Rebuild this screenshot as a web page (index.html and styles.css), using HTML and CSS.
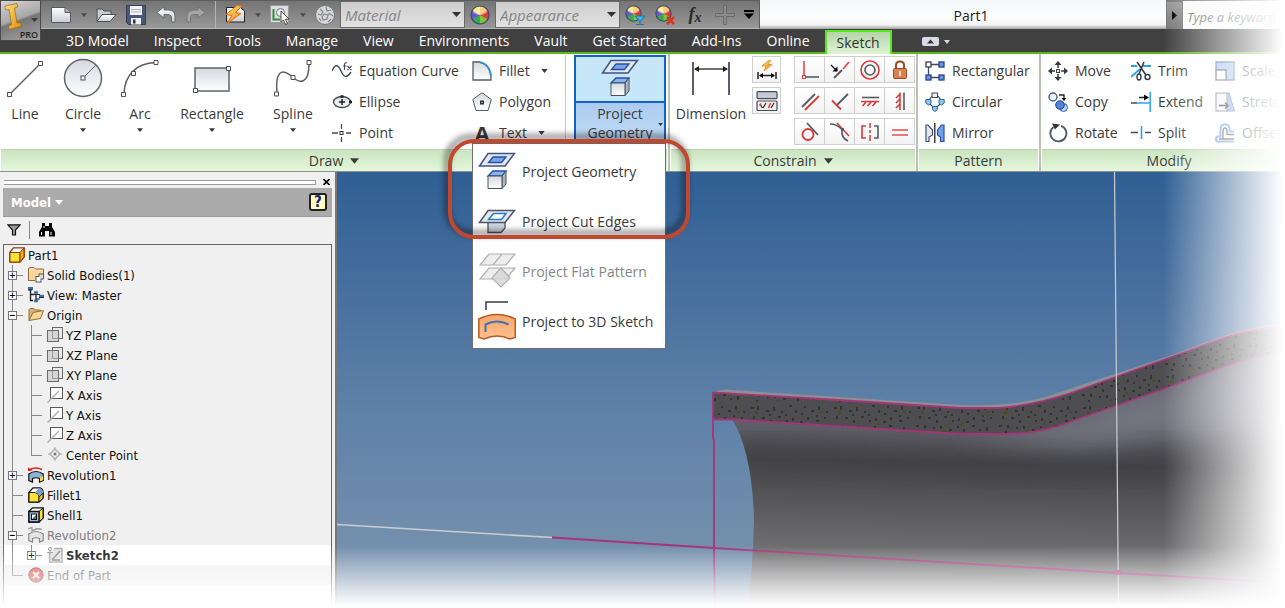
FILE: index.html
```html
<!DOCTYPE html>
<html lang="en">
<head>
    <meta charset="UTF-8">
    <meta name="viewport" content="width=device-width, initial-scale=1.0">
    <title>Part1</title>
    <link rel="stylesheet" href="styles.css">
</head>
<body>
    <!-- Shared symbols and gradients -->
    <svg class="defs" width="0" height="0" aria-hidden="true">
        <defs>
            <linearGradient id="paper" x1="0" y1="0" x2="0" y2="1"><stop offset="0" stop-color="#fff"/><stop offset="1" stop-color="#c9ccd2"/></linearGradient>
            <linearGradient id="steel" x1="0" y1="0" x2="0" y2="1"><stop offset="0" stop-color="#d5d8de"/><stop offset="1" stop-color="#fff"/></linearGradient>
            <linearGradient id="gold" x1="0" y1="0" x2="1" y2="1"><stop offset="0" stop-color="#ffe27a"/><stop offset="1" stop-color="#e08a08"/></linearGradient>
            <linearGradient id="orange" x1="0" y1="0" x2="0" y2="1"><stop offset="0" stop-color="#f9a66c"/><stop offset="1" stop-color="#ffc08c"/></linearGradient>
            <symbol id="wheel" viewBox="0 0 20 20">
                <path d="M10 10V1A9 9 0 0 1 17.8 5.5Z" fill="#f5a623"/>
                <path d="M10 10 17.8 5.5A9 9 0 0 1 17.8 14.5Z" fill="#e23a2e"/>
                <path d="M10 10 17.8 14.5A9 9 0 0 1 10 19Z" fill="#7cc33a"/>
                <path d="M10 10V19A9 9 0 0 1 2.2 14.5Z" fill="#35a853"/>
                <path d="M10 10 2.2 14.5A9 9 0 0 1 2.2 5.5Z" fill="#6a55c9"/>
                <path d="M10 10 2.2 5.5A9 9 0 0 1 10 1Z" fill="#f6dc4a"/>
                <ellipse cx="10" cy="6" rx="7" ry="4" fill="#fff" opacity=".45"/>
                <circle cx="10" cy="10" r="9" fill="none" stroke="#3b4a6b" stroke-width="1.2"/>
            </symbol>
            <symbol id="plane" viewBox="0 0 16 16">
                <rect x="5.5" y=".5" width="10" height="11" fill="#e9e9e9" stroke="#6a6a6a"/>
                <rect x=".5" y="3.500" width="11" height="11" fill="#cfcfcf" fill-opacity=".8" stroke="#6a6a6a"/>
                <path d="M5.500 4v7.500H11" fill="none" stroke="#9a9a9a"/>
            </symbol>
            <symbol id="axis" viewBox="0 0 16 16">
                <rect x="3.500" y=".5" width="12" height="11" fill="#fff" stroke="#5a5a5a"/>
                <path d="M.5 15.500 12 4" stroke="#b0b0b0" stroke-width="1.500"/>
            </symbol>
            <symbol id="project" viewBox="0 0 38 38">
                <path d="M10 1.500H36.500L27 14H1.500Z" fill="#e3e7ee" stroke="#3f5680" stroke-width="1.500"/>
                <path d="M15 5H28L23.500 10.500H10.500Z" fill="#7ba4e6" stroke="#2450a8" stroke-width="1.300"/>
                <path d="M10 24 15 19H28L24 24Z" fill="#8db3ef" stroke="#2450a8" stroke-width="1.300"/>
                <path d="M24 24 28 19V32L24 36.500Z" fill="#aeb5c2" stroke="#4a5060"/>
                <path d="M10 24H24V36.500H10Z" fill="url(#steel)" stroke="#4a5060"/>
            </symbol>
            <symbol id="caret" viewBox="0 0 8 5"><path d="M0 0H8L4 5Z" fill="currentColor"/></symbol>
            <pattern id="grain" width="83" height="31" patternUnits="userSpaceOnUse">
                <rect width="83" height="31" fill="#4e4e50"/>
                <path d="M4 5h3M11 3v4M19 8h3M27 4v4M34 9h2M42 3h3M49 7v3M57 4h2M64 8h3M72 3v4M79 9h2M7 13v3M15 15h3M24 17v3M31 14h3M39 18h2M46 15v3M53 19h3M61 14v3M69 18h3M77 15h2M3 23h3M12 22v3M20 25h2M28 23v3M36 27h3M44 24h2M51 26v3M59 23h3M66 27h2M74 24v4M9 29h2M54 11h2M22 12h2M70 12v2M38 12h2" stroke="#343437" stroke-width="2" fill="none"/>
                <path d="M8 8h3v3h-3zM30 27h3v2h-3zM47 20h2v2h-2zM73 8h3v2h-3z" fill="#4c4b20"/>
            </pattern>
        </defs>
    </svg>

    <div class="app">
        <header class="titlebar">
            <div class="quick-access">
                <button class="qa-btn" aria-label="New"><svg width="20" height="16" viewBox="0 0 20 16"><path d="M.5.500H14L19.500 5.500V15.500H.5Z" fill="url(#paper)" stroke="#55595f"/><path d="M14 .5V5.500H19.500" fill="#aeb2ba" stroke="#55595f"/></svg></button>
                <button class="qa-arrow" aria-label="New options"><svg width="6" height="4"><use href="#caret"/></svg></button>
                <button class="qa-btn" aria-label="Open"><svg width="21" height="16" viewBox="0 0 21 16"><path d="M1 14V2H6L8 4H15V7" fill="#c6cad1" stroke="#4b4f55"/><path d="M1 14.500 6 7.500H20L14 14.500Z" fill="url(#paper)" stroke="#4b4f55"/></svg></button>
                <button class="qa-btn" aria-label="Save"><svg width="20" height="20" viewBox="0 0 20 20"><path d="M.5.500H19.500V19.500H2.500L.5 17.500Z" fill="#4a5878" stroke="#333f59"/><rect x="4" y="1" width="12" height="9" fill="#f3f4f6"/><path d="M5 4.500H15M5 7H15" stroke="#b0b5bf"/><rect x="5" y="13" width="10" height="6.500" fill="#eceef2"/><rect x="7" y="14.500" width="2.500" height="4" fill="#333"/></svg></button>
                <button class="qa-btn" aria-label="Undo"><svg width="20" height="17" viewBox="0 0 20 17"><path d="M1 6.500 8 .8V4H12C17 4 19 7 19 10.500V16H15.500V12C15.500 9.500 14 8.500 12 8.500H8V12Z" fill="url(#paper)" stroke="#555a63" stroke-width=".8"/></svg></button>
                <button class="qa-btn" aria-label="Redo"><svg width="20" height="17" viewBox="0 0 20 17"><path d="M19 6.500 12 .8V4H8C3 4 1 7 1 10.500V16H4.500V12C4.500 9.500 6 8.500 8 8.500H12V12Z" fill="#a5a5a5" stroke="#6c6c6c" stroke-width=".8"/></svg></button>
                <span class="qa-sep"></span>
                <button class="qa-btn" aria-label="Update"><svg width="21" height="19" viewBox="0 0 21 19"><path d="M1.500 2.500H15.500L19.500 6V17H1.500Z" fill="url(#paper)" stroke="#222"/><path d="M12 .5 1 9.500 7 10.500 2 18.500 16 8.500 10.500 7.500 17 1Z" fill="url(#gold)" stroke="#e86a10"/></svg></button>
                <button class="qa-arrow" aria-label="Update options"><svg width="6" height="4"><use href="#caret"/></svg></button>
                <button class="qa-btn" aria-label="Select"><svg width="21" height="20" viewBox="0 0 21 20"><rect x=".5" y=".5" width="18" height="17" fill="#dcdee2" stroke="#999"/><path d="M3.500 4V14.500H10" fill="none" stroke="#2b8f3a" stroke-width="2"/><circle cx="10.500" cy="7.500" r="4" fill="#eee" stroke="#777"/><path d="M11 6V17L13.500 15 15.500 19.500 17.500 18.500 15.500 14.500 19 14Z" fill="#fff" stroke="#444"/></svg></button>
                <button class="qa-arrow" aria-label="Select options"><svg width="6" height="4"><use href="#caret"/></svg></button>
                <button class="qa-btn" aria-label="Material browser"><svg width="20" height="20" viewBox="0 0 20 20"><circle cx="10" cy="10" r="9.500" fill="#d4d6da" stroke="#777"/><path d="M5 4 8 7 6 10 3 9M11 2 12 6 16 5M9 9 13 10 12 14 8 15 7 12ZM15 9 18 11M4 13 6 16M13 17 16 14M13 10 15 8" fill="none" stroke="#85888e" stroke-width="1.200"/></svg></button>
                <select class="qa-select" aria-label="Material"><option>Material</option></select>
                <button class="qa-btn" aria-label="Appearance browser"><svg width="20" height="20"><use href="#wheel"/></svg></button>
                <select class="qa-select" aria-label="Appearance"><option>Appearance</option></select>
                <button class="qa-btn" aria-label="Adjust"><svg width="20" height="20" viewBox="0 0 20 20"><use href="#wheel" width="17" height="17"/><path d="M10 11H20L15 16.500ZM15 16V19M11 19.500H19" fill="#38b5ee" stroke="#1577b8"/></svg></button>
                <button class="qa-btn" aria-label="Clear"><svg width="20" height="20" viewBox="0 0 20 20"><use href="#wheel" width="17" height="17"/><path d="M12 12 19 19M19 12 12 19" stroke="#e0301e" stroke-width="2.500"/></svg></button>
                <button class="qa-btn fx" aria-label="Parameters">f<sub>x</sub></button>
                <button class="qa-btn" aria-label="Add"><svg width="20" height="20" viewBox="0 0 20 20"><path d="M8.500.500H11.500V8.500H19.500V11.500H11.500V19.500H8.500V11.500H.5V8.500H8.500Z" fill="#8c8c8c" stroke="#6b6b6b"/></svg></button>
                <button class="qa-arrow" aria-label="Customize"><svg width="10" height="9" viewBox="0 0 10 9"><path d="M0 1H10" stroke="#000" stroke-width="2"/><path d="M0 3.500H10L5 9Z"/></svg></button>
            </div>
            <h1 class="doc-title">Part1</h1>
            <div class="search">
                <button class="search-toggle" aria-label="Expand search"><svg width="5" height="9" viewBox="0 0 5 9"><path d="M0 0V9L5 4.500Z"/></svg></button>
                <input class="search-input" type="text" aria-label="Search" placeholder="Type a keyword">
            </div>
        </header>

        <button class="app-button" aria-label="Application menu">
            <svg width="38" height="39" viewBox="0 0 38 39"><path d="M3 5 15 2.500 15.500 6 12.500 7 15 22 19 21.500 19.500 25.500 7 28.500 6.500 25 9.500 23.500 7 8.500 3.500 9Z" fill="url(#gold)" stroke="#8a5a10" stroke-width=".6"/><path d="M29 17H36L32.500 21Z" fill="#333a4a"/></svg>
            <span class="app-edition">PRO</span>
        </button>

        <nav class="tabs">
            <button class="tab">3D Model</button>
            <button class="tab">Inspect</button>
            <button class="tab">Tools</button>
            <button class="tab">Manage</button>
            <button class="tab">View</button>
            <button class="tab">Environments</button>
            <button class="tab">Vault</button>
            <button class="tab">Get Started</button>
            <button class="tab">Add-Ins</button>
            <button class="tab">Online</button>
            <button class="tab active">Sketch</button>
            <button class="tab-toggle" aria-label="Minimize ribbon"><svg width="28" height="9" viewBox="0 0 28 9"><rect width="17" height="9" rx="2" fill="#d9dce6"/><path d="M5 6.500H12L8.500 2.500Z" fill="#333"/><path d="M22 3H28L25 7Z" fill="#d9dce6"/></svg></button>
        </nav>

        <div class="ribbon">
            <section class="panel draw">
                <div class="panel-body">
                    <button class="big w-line"><svg width="36" height="38" viewBox="0 0 36 38"><path d="M2.500 35.500 33.500 4.500" stroke="#5a5f69" stroke-width="1.500"/><path d="M.5 33.500h4v4h-4zM31.500 2.500h4v4h-4z" fill="#fff" stroke="#4a4f59"/></svg><span>Line</span></button>
                    <button class="big w-circle"><svg width="40" height="40" viewBox="0 0 40 40"><circle cx="20" cy="20" r="18.500" fill="url(#steel)" stroke="#5f646c" stroke-width="1.500"/><path d="M20 20 33 7" stroke="#5f646c"/><rect x="18" y="18" width="4" height="4" fill="#fff" stroke="#4a4f59"/></svg><span>Circle</span><svg class="drop" width="6" height="4"><use href="#caret"/></svg></button>
                    <button class="big w-arc"><svg width="38" height="40" viewBox="0 0 38 40"><path d="M3 35C4 18 14 5 35 4.500" fill="none" stroke="#5a5f69" stroke-width="1.500"/><path d="M.5 34.500h4v4h-4zM10.500 13.500h4v4h-4zM33 2.500h4v4h-4z" fill="#fff" stroke="#4a4f59"/></svg><span>Arc</span><svg class="drop" width="6" height="4"><use href="#caret"/></svg></button>
                    <button class="big w-rect"><svg width="38" height="40" viewBox="0 0 38 40"><rect x="2" y="10" width="34" height="23" fill="url(#steel)" stroke="#5f646c" stroke-width="1.500"/><path d="M.5 30.500h4v4h-4zM33.500 8.500h4v4h-4z" fill="#fff" stroke="#4a4f59"/></svg><span>Rectangle</span><svg class="drop" width="6" height="4"><use href="#caret"/></svg></button>
                    <button class="big w-spline"><svg width="38" height="38" viewBox="0 0 38 38"><path d="M3 34C1 12 8 10 16 16 26 26 35 25 35 5" fill="none" stroke="#5a5f69" stroke-width="1.500"/><path d="M.5 33h4v4h-4zM17 16.500h4v4h-4zM33 1.500h4v4h-4z" fill="#fff" stroke="#4a4f59"/></svg><span>Spline</span><svg class="drop" width="6" height="4"><use href="#caret"/></svg></button>
                    <div class="stack w-curves">
                        <button class="small"><svg width="20" height="20" viewBox="0 0 20 20"><path d="M0 10C3 3 6 3 9 10S15 17 19 11" fill="none" stroke="#454a54" stroke-width="1.400"/><path d="M15 2Q12.500 1 12.500 4V9M11 5H14.500M15.500 5 19.500 9M19.500 5 15.500 9" fill="none" stroke="#454a54" stroke-width="1.100"/></svg>Equation Curve</button>
                        <button class="small"><svg width="20" height="20" viewBox="0 0 20 20"><ellipse cx="10" cy="10" rx="8.500" ry="5.500" fill="url(#steel)" stroke="#454a54" stroke-width="1.300"/><path d="M7 10H13M10 7V13" stroke="#222" stroke-width="1.500"/><path d="M8.500 4.500h3M17 10h3" stroke="#222" stroke-width="2.500"/></svg>Ellipse</button>
                        <button class="small"><svg width="20" height="20" viewBox="0 0 20 20"><path d="M0 10H6M14 10H19M9.500 1V6M9.500 14V19" stroke="#454a54" stroke-width="1.300"/><rect x="8" y="8.500" width="3" height="3" fill="#fff" stroke="#333"/></svg>Point</button>
                    </div>
                    <div class="stack w-shapes">
                        <button class="small"><svg width="20" height="20" viewBox="0 0 20 20"><path d="M1 19V1H7Q19 3 19 19Z" fill="url(#steel)" stroke="#555b66" stroke-width="1.300"/><path d="M7 1Q18 3 19 15" fill="none" stroke="#2f8fe0" stroke-width="1.600"/></svg>Fillet<svg class="side" width="7" height="4"><use href="#caret"/></svg></button>
                        <button class="small"><svg width="20" height="20" viewBox="0 0 20 20"><path d="M10 .8 19.300 7.500 16 18.500H4L.8 7.500Z" fill="url(#steel)" stroke="#555b66"/><rect x="8" y="8.500" width="4" height="4" fill="#333"/><path d="M9.500 10.500h1" stroke="#fff"/></svg>Polygon</button>
                        <button class="small"><span class="letter-icon">A</span>Text<svg class="side" width="7" height="4"><use href="#caret"/></svg></button>
                    </div>
                    <div class="project">
                        <button class="project-icon" aria-label="Project Geometry"><svg width="38" height="38"><use href="#project"/></svg></button>
                        <button class="project-label">Project<br>Geometry<svg class="project-caret" width="5" height="3"><use href="#caret"/></svg></button>
                        <div class="menu">
                            <button class="menu-item"><svg width="38" height="38"><use href="#project"/></svg>Project Geometry</button>
                            <button class="menu-item"><svg width="38" height="38" viewBox="0 0 38 38"><path d="M10 18H27V26L23 30.500H10Z" fill="#ced3db" stroke="#4a5060" stroke-width="1.300"/><path d="M10 8.500H36.500L27 20.500H1.500Z" fill="#e3e7ee" stroke="#4a5568" stroke-width="1.500"/><path d="M15.500 11.500H28L23.500 17.500H10.500Z" fill="#fff" stroke="#2a78c8" stroke-width="1.500"/></svg>Project Cut Edges</button>
                            <button class="menu-item disabled" disabled><svg width="38" height="38" viewBox="0 0 38 38"><g fill="#ededed" stroke="#b0b0b0" stroke-width="1.200"><path d="M11 2H37L28 13H2Z"/><path d="M24 2 15 13"/><path d="M11 16H37L28 27H2Z"/><path d="M23 16 32 26 23 35 14 26Z" fill="#d6d6d6" fill-opacity=".8"/></g></svg>Project Flat Pattern</button>
                            <button class="menu-item"><svg width="38" height="42" viewBox="0 0 38 42"><path d="M8 10V2H30" fill="none" stroke="#333a48" stroke-width="1.500"/><path d="M.8 19Q19 10 37.200 19V37.500L32 39Q19 33 6 39L.8 37.500Z" fill="url(#orange)" stroke="#b75a28" stroke-width="1.500"/><path d="M7.500 32V24.500Q19 18.500 30.500 24.500" fill="none" stroke="#3f72b0" stroke-width="2"/></svg>Project to 3D Sketch</button>
                            <div class="callout"></div>
                        </div>
                    </div>
                </div>
                <button class="panel-title">Draw<svg width="9" height="6"><use href="#caret"/></svg></button>
            </section>

            <section class="panel constrain">
                <div class="panel-body">
                    <button class="big w-dim"><svg width="38" height="38" viewBox="0 0 38 38"><path d="M1 3V36M37 3V36" stroke="#5a5f69" stroke-width="2"/><path d="M3 10H35" stroke="#222" stroke-width="1.300"/><path d="M2 10 7 7V13ZM36 10 31 7V13Z" fill="#222"/></svg><span>Dimension</span></button>
                    <div class="tools auto-tools">
                        <button class="tool" aria-label="Automatic Dimensions"><svg width="22" height="20" viewBox="0 0 22 20"><path d="M13 0 6 6H10L8 11 16 4.500H12L15 0Z" fill="url(#gold)" stroke="#e0801a" stroke-width=".7"/><path d="M2 12V19M20 12V19M4 15.500H18" stroke="#222" stroke-width="1.500"/><path d="M3 15.500 7 13V18ZM19 15.500 15 13V18Z"/></svg></button>
                        <button class="tool" aria-label="Show Constraints"><svg width="22" height="20" viewBox="0 0 22 20"><rect x="1" y=".6" width="20" height="7" rx="1" fill="#c5cad3" stroke="#454b57" stroke-width="1.200"/><rect x="1" y="10" width="20" height="9.500" rx="1" fill="#eee" stroke="#454b57" stroke-width="1.200"/><path d="M7 17 10 12M4.500 14 6.500 17M15 17 18 12" stroke="#333" stroke-width="1.300"/><path d="M12.500 17 14.500 12M3.500 14.500 5 12.500" stroke="#d8451c" stroke-width="1.500"/></svg></button>
                    </div>
                    <div class="tools constraints">
                        <button class="tool" aria-label="Coincident"><svg width="20" height="20" viewBox="0 0 20 20"><path d="M4 1V15" stroke="#e04a4a" stroke-width="1.600"/><path d="M6 17H19" stroke="#555b66" stroke-width="1.600"/><rect x="2.500" y="15.500" width="3" height="3" fill="#fff" stroke="#d33"/></svg></button>
                        <button class="tool" aria-label="Collinear"><svg width="20" height="20" viewBox="0 0 20 20"><path d="M4 18 12 10" stroke="#555b66" stroke-width="2"/><path d="M13 9 19 2" stroke="#e04a4a" stroke-width="1.800"/><path d="M1 5 6 10" stroke="#111" stroke-width="1.300"/><path d="M7.500 6.500V11.500H2.500Z"/></svg></button>
                        <button class="tool" aria-label="Concentric"><svg width="20" height="20" viewBox="0 0 20 20"><circle cx="10" cy="10" r="9" fill="none" stroke="#d83a3a" stroke-width="1.600"/><circle cx="10" cy="10" r="5" fill="none" stroke="#555b66" stroke-width="1.600"/></svg></button>
                        <button class="tool" aria-label="Fix"><svg width="20" height="20" viewBox="0 0 20 20"><path d="M6 9V5Q6 1.500 10 1.500T14 5V9" fill="none" stroke="#9b4a26" stroke-width="2"/><rect x="3.500" y="8.500" width="13" height="10" rx="1" fill="#d98250" stroke="#9b4a26"/><path d="M10 11V16" stroke="#fff" stroke-width="1.500"/></svg></button>
                        <button class="tool" aria-label="Parallel"><svg width="20" height="20" viewBox="0 0 20 20"><path d="M2 16 15 3" stroke="#555b66" stroke-width="1.800"/><path d="M5 19 19 5" stroke="#d83a3a" stroke-width="1.800"/></svg></button>
                        <button class="tool" aria-label="Perpendicular"><svg width="20" height="20" viewBox="0 0 20 20"><path d="M7 14 18 3" stroke="#555b66" stroke-width="1.800"/><path d="M2 9.500 11 18.500" stroke="#d83a3a" stroke-width="1.800"/></svg></button>
                        <button class="tool" aria-label="Horizontal"><svg width="20" height="20" viewBox="0 0 20 20"><path d="M2 6.500H19" stroke="#555b66" stroke-width="1.600"/><path d="M1 10.500H19M6 11 2.500 15M11 11 7.500 15M16 11 12.500 15" stroke="#d83a3a" stroke-width="1.600"/></svg></button>
                        <button class="tool" aria-label="Vertical"><svg width="20" height="20" viewBox="0 0 20 20"><path d="M14 1.500V19" stroke="#555b66" stroke-width="1.600"/><path d="M10 1.500V19M10 3 6 7M10 8 6 12M10 13 6 17" stroke="#d83a3a" stroke-width="1.600"/></svg></button>
                        <button class="tool" aria-label="Tangent"><svg width="20" height="20" viewBox="0 0 20 20"><circle cx="8" cy="12.500" r="5.500" fill="none" stroke="#d83a3a" stroke-width="1.800"/><path d="M7 1 18 13" stroke="#555b66" stroke-width="1.800"/></svg></button>
                        <button class="tool" aria-label="Smooth"><svg width="20" height="20" viewBox="0 0 20 20"><path d="M0 2Q7 2 12 7.500 11 16 18 19" fill="none" stroke="#555b66" stroke-width="1.600"/><path d="M7 1 19 14" stroke="#d83a3a" stroke-width="1.500"/><rect x="11" y="6" width="3" height="3" fill="#555b66"/></svg></button>
                        <button class="tool" aria-label="Symmetric"><svg width="20" height="20" viewBox="0 0 20 20"><path d="M6 4H2V16H6" fill="none" stroke="#d83a3a" stroke-width="1.600"/><path d="M10 1V6M10 8V11M10 13V19" stroke="#d83a3a" stroke-width="1.500"/><path d="M14 4H18V16H14" fill="none" stroke="#555b66" stroke-width="1.600"/></svg></button>
                        <button class="tool" aria-label="Equal"><svg width="20" height="20" viewBox="0 0 20 20"><path d="M2 8H18M2 13H18" stroke="#e05050" stroke-width="1.600"/></svg></button>
                    </div>
                </div>
                <button class="panel-title">Constrain<svg width="9" height="6"><use href="#caret"/></svg></button>
            </section>

            <section class="panel pattern">
                <div class="panel-body">
                    <div class="stack">
                        <button class="small"><svg width="20" height="20" viewBox="0 0 20 20"><path d="M6 3.500H14M3.500 6V14M6 16.500H14" stroke="#444a56" stroke-width="1.300"/><rect x="1" y="1" width="5" height="5" fill="#fff" stroke="#33415f" stroke-width="1.300"/><g fill="#6f96e0" stroke="#1e3f94" stroke-width="1.300"><rect x="14" y="1" width="5" height="5"/><rect x="1" y="14" width="5" height="5"/><rect x="14" y="14" width="5" height="5"/></g></svg>Rectangular</button>
                        <button class="small"><svg width="20" height="20" viewBox="0 0 20 20"><path d="M7 4 4 8M13 4 16 8M5 12 8 15M15 12 12 15" stroke="#444a56" stroke-width="1.200"/><rect x="7" y="1" width="5.500" height="4.500" fill="#eee" stroke="#444a56"/><g fill="#8fc6ee" stroke="#2b6ca8"><path d="M.8 7.500H6V11.500L3.500 13 .8 11Z"/><path d="M14 7.500H19.200V11L16.500 13 14 11.500Z"/><path d="M7.500 14.500H12.500V17.500L10 19.500 7.500 17.500Z"/></g></svg>Circular</button>
                        <button class="small"><svg width="20" height="20" viewBox="0 0 20 20"><path d="M1 2H3L7.500 7V12L4 14V18.500H1Z" fill="#e6e9ee" stroke="#3d4e78" stroke-width="1.200"/><path d="M9.800 0V20" stroke="#222" stroke-width="1.300"/><path d="M19 2H16.500L12.500 7V12L15.500 14V18.500H19Z" fill="#6fa0e8" stroke="#2a51a4" stroke-width="1.200"/></svg>Mirror</button>
                    </div>
                </div>
                <div class="panel-title">Pattern</div>
            </section>

            <section class="panel modify">
                <div class="panel-body">
                    <div class="stack w-move">
                        <button class="small"><svg width="20" height="20" viewBox="0 0 20 20"><path d="M10 0 13.500 4H6.500ZM10 20 6.500 16H13.500ZM0 10 4 6.500V13.500ZM20 10 16 13.500V6.500Z" fill="#33373f"/><path d="M10 3V7M10 13V17M3 10H7M13 10H17" stroke="#33373f" stroke-width="1.500"/><rect x="8.500" y="8.500" width="3" height="3" fill="#fff" stroke="#444"/></svg>Move</button>
                        <button class="small"><svg width="20" height="20" viewBox="0 0 20 20"><circle cx="5" cy="5" r="4" fill="#eef1f6" stroke="#4a6086" stroke-width="1.400"/><path d="M11 3H16V7" fill="none" stroke="#222" stroke-width="1.300"/><path d="M13.500 6H18.500L16 9Z"/><circle cx="15.500" cy="15.500" r="4" fill="#b9d2f5" stroke="#3a5fa8"/><circle cx="12" cy="13" r="4.300" fill="#4f83dc" stroke="#1f4696"/></svg>Copy</button>
                        <button class="small"><svg width="20" height="20" viewBox="0 0 20 20"><path d="M13 2.800A8 8 0 1 1 5.500 4" fill="none" stroke="#555b66" stroke-width="1.900"/><path d="M4 .5 12 1.500 7 6.500Z" fill="#333"/></svg>Rotate</button>
                    </div>
                    <div class="stack w-trim">
                        <button class="small"><svg width="20" height="20" viewBox="0 0 20 20"><path d="M0 5H6M12 5H20M9 8 0 16" stroke="#2aa0f5" stroke-width="1.800"/><path d="M6 1 15 14M13 1 8 13" stroke="#333a44" stroke-width="1.500"/><ellipse cx="8" cy="16" rx="2" ry="3" fill="none" stroke="#333a44" stroke-width="1.400"/><ellipse cx="16.500" cy="16" rx="2.500" ry="2.500" fill="none" stroke="#333a44" stroke-width="1.400"/></svg>Trim</button>
                        <button class="small"><svg width="20" height="20" viewBox="0 0 20 20"><path d="M0 11H6" stroke="#444a56" stroke-width="1.500"/><path d="M6 11H19M19.200 0V20" stroke="#2aa0f5" stroke-width="1.500"/><path d="M8 5.500H14" stroke="#222" stroke-width="1.500"/><path d="M13 2.500 18 5.500 13 8.500Z"/></svg>Extend</button>
                        <button class="small"><svg width="20" height="20" viewBox="0 0 20 20"><path d="M0 9.500H7M14 9.500H20" stroke="#444a56" stroke-width="1.600"/><path d="M10.500 3V16" stroke="#2aa0f5" stroke-width="1.600"/></svg>Split</button>
                    </div>
                    <div class="stack">
                        <button class="small"><svg width="20" height="20" viewBox="0 0 20 20"><path d="M1 1H19V19H11V9H1Z" fill="#a9c3ee" stroke="#5a7ab8" stroke-width="1.300"/><rect x="1" y="9" width="10" height="10" fill="#fff" stroke="#666" stroke-width="1.300"/></svg>Scale</button>
                        <button class="small"><svg width="20" height="20" viewBox="0 0 20 20"><path d="M11 1H14L19.500 19H11Z" fill="#8fb2ea" stroke="#5a7ab8"/><rect x="1" y="1" width="11" height="18" fill="#f3f3f3" stroke="#777"/><path d="M4 13.500H13M10 10.500 13 13.500 10 16.500" fill="none" stroke="#333" stroke-width="1.500"/></svg>Stretch</button>
                        <button class="small"><svg width="20" height="20" viewBox="0 0 20 20"><path d="M19 18.500H3Q1 18.500 1 16T3 13.500H5.500V6Q5.500 1.500 10 1.500T14.500 6V8.500H19" fill="none" stroke="#6aa6ea" stroke-width="2"/><path d="M4 16H8V8Q8 5 10 5T12 8V11.500H19M8 16H19" fill="none" stroke="#555" stroke-width="1.300"/></svg>Offset</button>
                    </div>
                </div>
                <div class="panel-title">Modify</div>
            </section>
        </div>

        <main class="workspace">
            <aside class="browser">
                <div class="grip-row">
                    <span class="grip"></span>
                    <button class="close" aria-label="Close"><svg width="7" height="6" viewBox="0 0 7 6"><path d="M.5 0 6.500 6M6.500 0 .5 6" stroke="#000" stroke-width="1.600"/></svg></button>
                </div>
                <div class="browser-head">
                    <button class="browser-title">Model<svg width="8" height="5"><use href="#caret"/></svg></button>
                    <button class="help" aria-label="Help">?</button>
                </div>
                <div class="browser-tools">
                    <button class="bt" aria-label="Filter"><svg width="14" height="12" viewBox="0 0 14 12"><path d="M.8.800H13.200L8.500 6V11H5.500V6Z" fill="#9b9b9b" stroke="#111" stroke-width="1.200"/></svg></button>
                    <span class="bt-sep"></span>
                    <button class="bt" aria-label="Find"><svg width="16" height="14" viewBox="0 0 16 14"><path d="M3 0H6V3H10V0H13V4L16 9V13.500H10V8H6V13.500H0V9L3 4Z"/><path d="M2.500 9V12M12 9V12M5 3V5" stroke="#fff"/></svg></button>
                </div>
                <div class="tree">
                    <div class="row"><svg class="node" viewBox="0 0 16 16"><path d="M.8 5.500 4.500.8H15.200V10L11 15.200H.8Z" fill="#fff" stroke="#8a3a08" stroke-width="1.300"/><path d="M1 5.500H11V15H1Z" fill="#ffe233" stroke="#8a3a08"/><path d="M11 5.500 15 1V10L11 15Z" fill="#f0b010" stroke="#8a3a08"/></svg>Part1</div>
                    <div class="row"><span class="cell tee"><button class="expander" aria-label="Expand">+</button></span><svg class="node" viewBox="0 0 16 16"><path d="M.5 13.500V1.500L2 .5H6L7.500 2H15.500V8" fill="#fbdda8" stroke="#8b6a3a"/><path d="M.5 13.500H8V8H15V4H.5Z" fill="#fbd49a"/><path d="M.5 1.500V13.500H7" fill="none" stroke="#8b6a3a"/><rect x="8" y="9.500" width="5" height="5.500" fill="#fff" stroke="#555"/><path d="M11 9.500V7H15.500V12H13" fill="#ddd" stroke="#555"/></svg>Solid Bodies(1)</div>
                    <div class="row"><span class="cell tee"><button class="expander" aria-label="Expand">+</button></span><svg class="node" viewBox="0 0 16 16"><path d="M0 2H5M2.500 3V13.500H5M2.500 7.500H6M8 7V13.500" fill="none" stroke="#222" stroke-width="1.300"/><path d="M0 1H5M6 5.500H10M11 9H16M6 14H10" stroke="#3a6ea8" stroke-width="2.500"/><path d="M0 3H4M6 7.500H12M11 10.500H16M8 12H12" stroke="#222"/></svg>View: Master</div>
                    <div class="row"><span class="cell tee"><button class="expander" aria-label="Collapse">−</button></span><svg class="node" viewBox="0 0 16 16"><path d="M1 13.500V2.500L2 1.500H6L7.500 3H12.500V6" fill="#d9b070" stroke="#94713d"/><path d="M1 13.500 5 5.500 15.500 3.500 12.500 11.500Z" fill="#f6d496" stroke="#94713d"/></svg>Origin</div>
                    <div class="row"><span class="cell bar"></span><span class="cell tee"></span><svg class="node"><use href="#plane"/></svg>YZ Plane</div>
                    <div class="row"><span class="cell bar"></span><span class="cell tee"></span><svg class="node"><use href="#plane"/></svg>XZ Plane</div>
                    <div class="row"><span class="cell bar"></span><span class="cell tee"></span><svg class="node"><use href="#plane"/></svg>XY Plane</div>
                    <div class="row"><span class="cell bar"></span><span class="cell tee"></span><svg class="node"><use href="#axis"/></svg>X Axis</div>
                    <div class="row"><span class="cell bar"></span><span class="cell tee"></span><svg class="node"><use href="#axis"/></svg>Y Axis</div>
                    <div class="row"><span class="cell bar"></span><span class="cell tee"></span><svg class="node"><use href="#axis"/></svg>Z Axis</div>
                    <div class="row"><span class="cell bar"></span><span class="cell ell"></span><svg class="node" viewBox="0 0 16 16"><path d="M8 2 13 7 8 12 3 7Z" fill="#eee" stroke="#aaa" stroke-width="1.300"/><path d="M8 0V3M8 11V14M1 7H4M12 7H15" stroke="#aaa"/><circle cx="8" cy="7" r="1.500" fill="#777"/></svg>Center Point</div>
                    <div class="row"><span class="cell tee"><button class="expander" aria-label="Expand">+</button></span><svg class="node" viewBox="0 0 16 16"><path d="M2 2.500Q8-.5 14 2.500" fill="none" stroke="#e01818" stroke-width="1.500"/><path d="M0 .5 5 3.500 0 4Z" fill="#e01818"/><path d="M.8 7Q8 2 15.200 7V13.500L11.500 15V11.500Q8 10 4.500 11.500V15L.8 13.500Z" fill="#8fb2d6" stroke="#111" stroke-width="1.200"/><path d="M12 11 15 9V13L12 14.500Z" fill="#ffe233"/></svg>Revolution1</div>
                    <div class="row"><span class="cell tee"></span><svg class="node" viewBox="0 0 16 16"><path d="M.8 5.500 5 .8H12Q15.200 2 15.200 6V11L11 15.200H.8Z" fill="#fff" stroke="#111" stroke-width="1.200"/><path d="M1 5.500H7Q11 6 11 10V15H1Z" fill="#ffe233" stroke="#111"/><path d="M7 5.500 11 1Q15 2 15 6L11 10Q10.500 6 7 5.500Z" fill="#7ba0cc"/><path d="M11 10 15 6V11L11 15Z" fill="#e8b818" stroke="#111" stroke-width=".8"/></svg>Fillet1</div>
                    <div class="row"><span class="cell tee"></span><svg class="node" viewBox="0 0 16 16"><path d="M.8 4.500 4.500.8H15.200V11L11 15.200H.8Z" fill="#fff" stroke="#111" stroke-width="1.300"/><path d="M11 4.500 15 1V11L11 15Z" fill="#ffe233" stroke="#111"/><path d="M1 4.500H11V15H1Z" fill="#9cbbe0" stroke="#111" stroke-width="1.300"/><rect x="3.500" y="7" width="5" height="5.500" fill="#fff" stroke="#111"/><path d="M4 12 8 8V12Z" fill="#3a6ea8"/></svg>Shell1</div>
                    <div class="row muted"><span class="cell tee"><button class="expander" aria-label="Collapse">−</button></span><svg class="node" viewBox="0 0 16 16"><path d="M0 2 4 .5V4Q9 .5 14 2.500" fill="none" stroke="#999" stroke-width="1.300"/><path d="M.8 7Q8 2 15.200 7V13.500L11.500 15V11.500Q8 10 4.500 11.500V15L.8 13.500Z" fill="#e4e4e4" stroke="#888" stroke-width="1.200"/></svg>Revolution2</div>
                    <div class="row current"><span class="cell bar"></span><span class="cell stub"><button class="expander" aria-label="Expand">+</button></span><svg class="node" viewBox="0 0 16 16"><path d="M2.500 6V15H15V1.500H7" fill="#e3e3e3" stroke="#aaa" stroke-width="1.500"/><path d="M5 13 13 4M5 13H13" stroke="#8a8a8a" stroke-width="1.500"/><circle cx="3" cy="2" r="1.500" fill="none" stroke="#999"/><path d="M3 3.500V7M0 5.500H6" stroke="#999"/></svg>Sketch2</div>
                    <div class="row last muted"><span class="cell ell"></span><svg class="node" viewBox="0 0 16 16"><circle cx="8" cy="8" r="7.200" fill="#e84a4a" stroke="#6a4a4a"/><path d="M5 5 11 11M11 5 5 11" stroke="#fff" stroke-width="2"/></svg>End of Part</div>
                    <div class="tree-rest"></div>
                </div>
            </aside>

            <div class="viewport">
                <svg class="scene" viewBox="337 172 948 436" preserveAspectRatio="xMinYMin slice">
                    <defs>
                        <linearGradient id="body" gradientUnits="userSpaceOnUse" x1="900" y1="410" x2="896" y2="608">
                            <stop offset="0" stop-color="#666670"/>
                            <stop offset=".12" stop-color="#5b5b62"/>
                            <stop offset=".26" stop-color="#454548"/>
                            <stop offset=".45" stop-color="#555557"/>
                            <stop offset=".7" stop-color="#6e6e70"/>
                            <stop offset="1" stop-color="#858587"/>
                        </linearGradient>
                        <clipPath id="bodyClip"><path d="M732 419.500 960 434H1004C1030 432 1050 429 1071 421L1166 386 1223 366 1285 350V608H747Q753 570 754 520 752 450 732 419.500Z"/></clipPath>
                        <filter id="soft" x="-20%" y="-80%" width="140%" height="260%"><feGaussianBlur stdDeviation="12"/></filter>
                    </defs>
                    <g clip-path="url(#bodyClip)">
                        <rect x="700" y="320" width="600" height="288" fill="url(#body)"/>
                        <path d="M960 434 1080 420 1290 345V415L1150 436 1080 446Z" fill="#757582" filter="url(#soft)"/>
                        <path d="M740 449 900 460 1020 471 1110 467 1290 450" fill="none" stroke="#3f3f42" stroke-width="18" opacity=".7" filter="url(#soft)"/>
                    </g>
                    <path d="M716 391 726 389.500 900 401 960 405Q1010 407 1045 397L1166 357 1223 336.500Q1254 326 1285 324V330L1166 362 1071 395 1000 410H960L713 394Z" fill="#8d8f92"/>
                    <path d="M713 392.500 838 400 960 408H999Q1035 405 1071 393L1166 359 1223 338Q1254 328 1285 326.500V353Q1255 356 1223 367.500L1166 388 1071 421.500Q1040 434 1004 434H960L732 419.500H713Z" fill="url(#grain)"/>
                    <g fill="none" stroke="#a63479" stroke-width="1.800">
                        <path d="M713 392.500 838 400 960 408H999Q1035 405 1071 393L1166 359 1223 338Q1254 328 1285 326.500"/>
                        <path d="M713 419.500H732L960 434H1004Q1040 434 1071 421.500L1166 388 1223 367.500Q1255 356 1285 353"/>
                        <path d="M713 392V439L714 440V552L715 608"/>
                        <path d="M552 537.500 714 548 1118 573 1285 583"/>
                    </g>
                    <path d="M337 524.500 552 537.500" stroke="#c9cdd1" stroke-width="1.600"/>
                    <path d="M1114.500 172 1118.500 608" stroke="#c9cdd1" stroke-width="1.200"/>
                    <rect x="1115.500" y="570" width="5" height="5" fill="#b0387f"/>
                </svg>
            </div>
        </main>
        <div class="fade-right"></div>
        <div class="fade-bottom"></div>
    </div>
</body>
</html>
```
FILE: styles.css
```css
* {
    box-sizing: border-box;
}

body {
    margin: 0;
    font-family: "Open Sans", "Noto Sans", sans-serif;
    font-size: 14px;
    color: #3a3a3a;
    background-color: #fff;
}

button {
    margin: 0;
    padding: 0;
    border: none;
    background: none;
    font: inherit;
    color: inherit;
    cursor: pointer;
}

svg {
    flex: none;
}

.defs {
    position: absolute;
}

.app {
    position: relative;
    display: flex;
    flex-direction: column;
    height: 100vh;
    overflow: hidden;
}

/* Title bar */
.titlebar {
    display: flex;
    height: 29px;
    flex: none;
    background: linear-gradient(#f4f7f9, #fdfdfd 60%, #f4f4f4 85%, #a5a5a5);
}

.quick-access {
    display: flex;
    align-items: center;
    padding: 0 1px 0 46px;
    border-top: 1px solid #5d5d5d;
    border-right: 1px solid #5d5d5d;
    border-bottom: 1px solid #b5b5b5;
    background: linear-gradient(#747474, #989898);
}

.qa-btn {
    display: flex;
    align-items: center;
    justify-content: center;
    width: 30px;
    height: 27px;
}

.qa-arrow {
    display: flex;
    align-items: center;
    justify-content: center;
    width: 15px;
    height: 27px;
    color: #4a4a4a;
}

.qa-arrow:last-child {
    width: 18px;
}

.qa-sep {
    width: 1px;
    height: 27px;
    margin: 0 4px;
    background-color: #b4b4b4;
}

.qa-select {
    appearance: none;
    width: 125px;
    height: 27px;
    padding: 0 4px;
    border: 1px solid #6a6a6a;
    border-radius: 0;
    font: italic 15px "Open Sans", "Noto Sans", sans-serif;
    color: #858585;
    background: url("data:image/svg+xml,%3Csvg xmlns='http://www.w3.org/2000/svg' width='9' height='5'%3E%3Cpath d='M0 0H9L4.500 5Z' fill='%23333'/%3E%3C/svg%3E") right 3px center no-repeat, linear-gradient(#cdcdcd, #e2e2e2);
}

.fx {
    font: italic bold 18px "Liberation Serif", serif;
    color: #2b2b2b;
}

.fx sub {
    padding-top: 6px;
    font-size: 14px;
}

.doc-title {
    flex: 1;
    margin: 0;
    padding-left: 16px;
    font-size: 14px;
    font-weight: normal;
    line-height: 32px;
    text-align: center;
    color: #222;
}

.search {
    display: flex;
    width: 119px;
    border-top: 1px solid #777;
}

.search-toggle {
    display: flex;
    align-items: center;
    justify-content: center;
    width: 17px;
    border: 1px solid #777;
    background: linear-gradient(#999, #777);
}

.search-input {
    flex: 1;
    min-width: 0;
    padding: 4px 0 0 4px;
    border: none;
    background-color: #fafafa;
    font: italic 13px "Open Sans", "Noto Sans", sans-serif;
}

.search-input::placeholder {
    color: #777;
}

.app-button {
    position: absolute;
    top: 0;
    left: 0;
    z-index: 3;
    width: 41px;
    height: 41px;
    border: 1px solid #4a4a4a;
    background: linear-gradient(160deg, #d5d5d5, #a8a8a8 45%, #777 50%, #a5a5a5);
}

.app-edition {
    position: absolute;
    right: 2px;
    bottom: 0;
    font-size: 9px;
    font-weight: 600;
    line-height: 11px;
    color: #222;
}

/* Tabs */
.tabs {
    display: flex;
    align-items: flex-end;
    gap: 1px;
    height: 25px;
    flex: none;
    padding-left: 54px;
    border-bottom: 2px solid #58b81c;
    background-color: #404040;
}

.tab {
    height: 23px;
    padding: 0 12px;
    line-height: 22px;
    color: #fff;
    white-space: nowrap;
}

.tab.active {
    height: 24px;
    margin: 0 0 -2px 2px;
    padding: 0 10px;
    border: 2px solid #55e81e;
    border-bottom: none;
    background: linear-gradient(#b5d3a8, #dff5d6);
    line-height: 20px;
    color: #333;
}

.tab-toggle {
    margin-left: 29px;
    height: 23px;
    line-height: 20px;
}

/* Ribbon */
.ribbon {
    position: relative;
    z-index: 2;
    display: flex;
    height: 118px;
    flex: none;
    border-bottom: 1px solid #8f8f8f;
    background-color: #fff;
}

.panel {
    display: flex;
    flex-direction: column;
    flex: none;
    border-right: 2px solid #b9c4b4;
}

.panel-body {
    display: flex;
    height: 95px;
    padding-top: 1px;
}

.panel-title {
    display: flex;
    align-items: center;
    justify-content: center;
    gap: 7px;
    flex: 1;
    margin: 0 1px;
    border-top: 1px solid #bdd4b4;
    background: linear-gradient(#cbe4c0, #e4f7dc);
}

.draw {
    width: 670px;
}

.constrain {
    width: 248px;
}

.pattern {
    width: 123px;
}

.modify {
    flex: 1 0 256px;
    border-right: none;
}

.big {
    display: flex;
    flex-direction: column;
    align-items: center;
    flex: none;
    padding-top: 3px;
}

.big > span {
    height: 24px;
    margin-top: 4px;
    line-height: 24px;
}

.big > svg:first-child {
    height: 40px;
}

.big .drop {
    margin-top: 2px;
}

.w-line {
    width: 50px;
}

.w-circle,
.w-spline {
    width: 66px;
}

.w-arc {
    width: 48px;
}

.w-rect {
    width: 96px;
}

.w-dim {
    width: 82px;
}

/* Square icon buttons of the Constrain panel */
.tools {
    display: grid;
    grid-auto-rows: 27px;
    align-content: start;
    row-gap: 4px;
    padding-top: 1px;
}

.auto-tools {
    grid-template-columns: 28px;
    margin-right: 14px;
}

.constraints {
    grid-template-columns: repeat(4, 30px);
}

.tool {
    display: flex;
    align-items: center;
    justify-content: center;
    margin-right: -1px;
    border: 1px solid #cfcfcf;
    background: linear-gradient(#fff, #f3f3f3);
}

.stack {
    display: flex;
    flex-direction: column;
    flex: none;
    padding-left: 6px;
}

.pattern .stack,
.modify .stack {
    padding-left: 7px;
}

.w-curves {
    width: 140px;
}

.w-shapes {
    width: 100px;
    border-right: 1px solid #c8c8c8;
}

.w-move {
    width: 83px;
}

.w-trim {
    width: 84px;
}

.small {
    display: flex;
    align-items: center;
    gap: 7px;
    height: 31px;
    white-space: nowrap;
}

.letter-icon {
    width: 20px;
    font: bold 22px "Open Sans", sans-serif;
    text-align: center;
}

.side {
    margin-left: 4px;
}

/* Project Geometry split button and its menu */
.project {
    position: relative;
    display: flex;
    flex-direction: column;
    width: 92px;
    height: 89px;
    margin-left: 8px;
    border: 2px solid #1163c4;
}

.project-icon {
    height: 46px;
    padding-top: 2px;
    border-bottom: 2px solid #1163c4;
    background: linear-gradient(#c8e6f7, #c4e8fa);
}

.project-label {
    position: relative;
    flex: 1;
    padding-top: 1px;
    line-height: 19px;
    background: linear-gradient(#accbf0, #c2dcf6);
}

.project-caret {
    position: absolute;
    right: 1px;
    top: 20px;
}

.menu {
    position: absolute;
    top: 86px;
    right: -2px;
    width: 194px;
    padding: 2px 0 2px 5px;
    border: 1px solid #6e6e6e;
    background-color: #fff;
}

.menu-item {
    display: flex;
    align-items: center;
    gap: 6px;
    width: 100%;
    height: 50px;
    white-space: nowrap;
}

.menu-item.disabled {
    color: #858585;
}

.callout {
    position: absolute;
    top: -5px;
    left: -25px;
    width: 242px;
    height: 100px;
    border: 4px solid #c1472e;
    border-radius: 26px;
    filter: drop-shadow(-3px -4px 3px rgba(0, 0, 0, 0.6));
    pointer-events: none;
}

/* Workspace */
.workspace {
    display: flex;
    flex: 1;
    min-height: 0;
}

.browser {
    display: flex;
    flex-direction: column;
    flex: none;
    width: 337px;
    padding: 4px 3px 0 3px;
    border-right: 2px solid #777;
    background-color: #f0f0f0;
    font-family: "DejaVu Sans Condensed", "DejaVu Sans", sans-serif;
    font-size: 13px;
    color: #111;
}

.grip-row {
    display: flex;
    align-items: center;
    height: 12px;
    gap: 5px;
}

.grip {
    flex: 1;
    height: 5px;
    margin-left: 1px;
    border: 1px solid #999;
    border-left: none;
    background-color: #fff;
}

.close {
    display: flex;
    padding: 2px;
}

.browser-head {
    display: flex;
    align-items: center;
    justify-content: space-between;
    height: 29px;
    padding: 0 5px 0 8px;
    border-bottom: 1px solid #999;
    background-color: #ababab;
}

.browser-title {
    display: flex;
    align-items: center;
    gap: 4px;
    font-weight: bold;
    color: #fff;
}

.help {
    width: 18px;
    height: 18px;
    border: 2px solid #222;
    border-radius: 3px;
    background-color: #ffffc0;
    font-size: 15px;
    font-weight: bold;
    line-height: 14px;
    color: #1a1a80;
}

.browser-tools {
    display: flex;
    align-items: center;
    gap: 7px;
    height: 27px;
    padding: 0 4px 2px;
}

.bt {
    display: flex;
    padding-right: 1px;
}

.bt-sep {
    width: 1px;
    height: 18px;
    margin-right: 2px;
    background-color: #888;
}

.tree {
    display: flex;
    flex-direction: column;
    flex: 1;
    min-height: 0;
    border: 1px solid #666;
    border-bottom: none;
}

.row {
    display: flex;
    align-items: center;
    height: 20px;
    flex: none;
    white-space: nowrap;
}

.node {
    width: 16px;
    height: 16px;
    margin: 0 3px 0 5px;
}

.cell {
    display: flex;
    align-items: center;
    width: 19px;
    height: 20px;
    padding-left: 4px;
    background-repeat: no-repeat;
    background-image: linear-gradient(#888, #888), linear-gradient(#888, #888);
}

.bar {
    background-position: 8px 0, 8px 0;
    background-size: 1px 20px, 0 0;
}

.tee {
    background-position: 8px 0, 8px 10px;
    background-size: 1px 20px, 11px 1px;
}

.ell,
.stub {
    background-position: 8px 0, 8px 10px;
    background-size: 1px 10px, 11px 1px;
}

.expander {
    display: flex;
    align-items: center;
    justify-content: center;
    width: 9px;
    height: 9px;
    margin-top: 1px;
    border: 1px solid #777;
    background-color: #fff;
    font-size: 9px;
    font-weight: bold;
    line-height: 7px;
    color: #000;
}

.muted {
    color: #7c7c7c;
}

.current {
    background-color: #fff;
    font-weight: bold;
}

.last {
    background-color: #f0f0f0;
    color: #5c5c5c;
}

.tree-rest {
    flex: 1;
    background-color: #fff;
}

.viewport {
    flex: 1;
    min-width: 0;
    background: linear-gradient(#2f5f94, #4c729f 32%, #5f82a8 56%, #738fad 85%, #7b94ae);
}

.scene {
    display: block;
    width: 100%;
    height: 100%;
}

/* Page edges dissolve to white */
.fade-right,
.fade-bottom {
    position: absolute;
    right: 0;
    bottom: 0;
    z-index: 5;
    pointer-events: none;
}

.fade-right {
    top: 0;
    width: 122px;
    background: linear-gradient(to right, rgba(255, 255, 255, 0), #fff 98%);
}

.fade-bottom {
    left: 0;
    height: 62px;
    background: linear-gradient(rgba(255, 255, 255, 0), #fff 97%);
}
```
